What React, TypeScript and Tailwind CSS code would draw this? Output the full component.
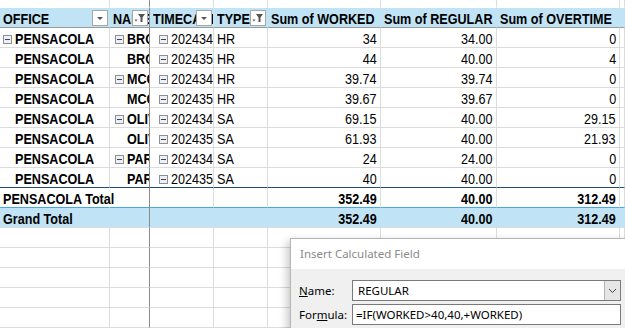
import type { ReactNode } from 'react';

const widths = [110, 40, 64, 54, 113, 116, 123, 5];

type Cell = { text?: ReactNode; right?: boolean; bold?: boolean; minus?: boolean; indent?: boolean; btn?: 'drop' | 'filter'; noLine?: boolean };

const MinusBox = () => (
    <span className="inline-flex items-center justify-center w-[9px] h-[9px] border border-[#8a8f99] bg-[#eef0f4] mr-[3px] shrink-0">
        <span className="block w-[5px] h-px bg-[#40454e]" />
    </span>
);

const FilterBtn = ({ kind }: { kind: 'drop' | 'filter' }) => (
    <span className="absolute right-[1px] top-[2px] w-[16px] h-[16px] bg-white border border-[#a8a8a8] flex items-center justify-center">
        {kind === 'drop' ? (
            <svg width="8" height="5" viewBox="0 0 8 5">
                <path d="M1 1h6L4 4z" fill="#555" />
            </svg>
        ) : (
            <svg width="12" height="10" viewBox="0 0 12 10">
                <path d="M4 1h7L8.5 4.5V9H6.5V4.5z" fill="#555" />
                <path d="M0.5 6.5h3L2 8.5z" fill="#555" />
            </svg>
        )}
    </span>
);

const Txt = ({ children, right }: { children: ReactNode; right?: boolean }) => (
    <span className={`inline-block scale-x-[0.84] ${right ? 'origin-right' : 'origin-left'}`}>{children}</span>
);

// left padding per column: OFFICE, NAME, TIMECARD, TYPE
const padLeft = ['pl-[3px]', 'pl-[5px]', 'pl-[9px]', 'pl-[3px]', 'pl-[3px]', 'pl-[3px]', 'pl-[3px]', 'pl-[3px]'];
const padIndent = ['pl-[15px]', 'pl-[17px]', 'pl-[21px]', 'pl-[3px]', 'pl-[3px]', 'pl-[3px]', 'pl-[3px]', 'pl-[3px]'];

const Row = ({ cells, h = 20, bg = '', border = 'border-b-[#dcdcdc]', lines = true, header = false }: { cells: Cell[]; h?: number; bg?: string; border?: string; lines?: boolean; header?: boolean }) => (
    <div className={`flex ${bg}`} style={{ height: h }}>
        {widths.map((w, i) => {
            const c = cells[i] || {};
            let rb = 'border-r border-r-[#dcdcdc]';
            if (i === 1) rb = 'border-r border-r-[#8c8c8c]';
            else if (!lines || c.noLine) rb = 'border-r border-r-transparent';
            const pad = c.right ? 'justify-end pr-[3px]' : c.indent ? padIndent[i] : header ? 'pl-[3px]' : padLeft[i];
            return (
                <div
                    key={i}
                    className={`relative shrink-0 whitespace-nowrap border-b ${border} ${rb} flex items-center pt-[3px] ${c.noLine ? '' : 'overflow-hidden'} ${pad} ${c.bold ? 'font-bold' : ''}`}
                    style={{ width: w }}
                >
                    {c.minus && <MinusBox />}
                    {c.text !== undefined && <Txt right={c.right}>{c.text}</Txt>}
                    {c.btn && <FilterBtn kind={c.btn} />}
                </div>
            );
        })}
    </div>
);

const data: [boolean, string, boolean, string, string, string, string, string][] = [
    [true, 'BROWN', true, '202434', 'HR', '34', '34.00', '0'],
    [false, 'BROWN', false, '202435', 'HR', '44', '40.00', '4'],
    [false, 'MCCOY', true, '202434', 'HR', '39.74', '39.74', '0'],
    [false, 'MCCOY', false, '202435', 'HR', '39.67', '39.67', '0'],
    [false, 'OLIVER', true, '202434', 'SA', '69.15', '40.00', '29.15'],
    [false, 'OLIVER', false, '202435', 'SA', '61.93', '40.00', '21.93'],
    [false, 'PARKER', true, '202434', 'SA', '24', '24.00', '0'],
    [false, 'PARKER', false, '202435', 'SA', '40', '40.00', '0'],
];

export default function App() {
    return (
        <div className="relative w-[625px] h-[328px] overflow-hidden bg-white text-[15px] text-black" style={{ fontFamily: '"Liberation Sans", Arial, sans-serif' }}>
            <Row h={8} cells={[]} border="border-b-transparent" />
            <Row
                bg="bg-[#c0e4f5]"
                border="border-b-[#9a9a9a]"
                lines={false}
                header
                cells={[
                    { text: 'OFFICE', bold: true, btn: 'drop' },
                    { text: 'NAME', bold: true, btn: 'filter' },
                    { text: 'TIMECARD', bold: true, btn: 'drop' },
                    { text: 'TYPE', bold: true, btn: 'filter' },
                    { text: 'Sum of WORKED', bold: true },
                    { text: 'Sum of REGULAR', bold: true },
                    { text: 'Sum of OVERTIME', bold: true },
                    {},
                ]}
            />
            {data.map((r, i) => (
                <Row
                    key={i}
                    border={i === data.length - 1 ? 'border-b-[#1e4e79]' : 'border-b-[#dcdcdc]'}
                    cells={[
                        { text: 'PENSACOLA', bold: true, minus: r[0], indent: !r[0] },
                        { text: r[1], bold: true, minus: r[2], indent: !r[2] },
                        { text: r[3], minus: true },
                        { text: r[4] },
                        { text: r[5], right: true },
                        { text: r[6], right: true },
                        { text: r[7], right: true },
                        {},
                    ]}
                />
            ))}
            <Row
                border="border-b-[#4aa8de]"
                header
                cells={[
                    { text: 'PENSACOLA Total', bold: true, noLine: true },
                    {},
                    {},
                    {},
                    { text: '352.49', right: true, bold: true },
                    { text: '40.00', right: true, bold: true },
                    { text: '312.49', right: true, bold: true },
                    {},
                ]}
            />
            <Row
                bg="bg-[#c0e4f5]"
                lines={false}
                header
                cells={[
                    { text: 'Grand Total', bold: true },
                    {},
                    {},
                    {},
                    { text: '352.49', right: true, bold: true },
                    { text: '40.00', right: true, bold: true },
                    { text: '312.49', right: true, bold: true },
                    {},
                ]}
            />
            {[0, 1, 2, 3, 4].map((k) => (
                <Row key={k} cells={[]} />
            ))}

            <div className="absolute left-[290px] top-[238px] w-[340px] h-[100px] border border-[#b5b5b5] shadow-[-3px_3px_8px_rgba(0,0,0,0.22)] bg-[#f0f0f0]" style={{ fontFamily: '"Noto Sans", "Open Sans", sans-serif' }}>
                <div className="h-[30px] bg-white flex items-center pl-[9px] text-[11.5px] text-[#8a8a8a]">Insert Calculated Field</div>
                <div className="flex items-center mt-[11px] h-[21px]">
                    <div className="w-[61px] pl-[8px] text-[11.5px] text-black">
                        <span className="underline">N</span>ame:
                    </div>
                    <div className="flex-1 mr-[8px] h-[21px] bg-white border border-[#7a7a7a] flex items-center relative">
                        <span className="pl-[5px] text-[11.5px]">REGULAR</span>
                        <span className="absolute right-0 top-0 h-full w-[16px] bg-[#e5e5e5] border-l border-[#b5b5b5] flex items-center justify-center">
                            <svg width="9" height="6" viewBox="0 0 9 6">
                                <path d="M1 1l3.5 3.5L8 1" stroke="#444" strokeWidth="1" fill="none" />
                            </svg>
                        </span>
                    </div>
                </div>
                <div className="flex items-center mt-[3px] h-[21px]">
                    <div className="w-[61px] pl-[8px] text-[11.5px] text-black">
                        For<span className="underline">m</span>ula:
                    </div>
                    <div className="flex-1 mr-[8px] h-[21px] bg-white border border-[#7a7a7a] flex items-center">
                        <span className="pl-[3px] text-[11.5px]">=IF(WORKED&gt;40,40,+WORKED)</span>
                    </div>
                </div>
            </div>
        </div>
    );
}
